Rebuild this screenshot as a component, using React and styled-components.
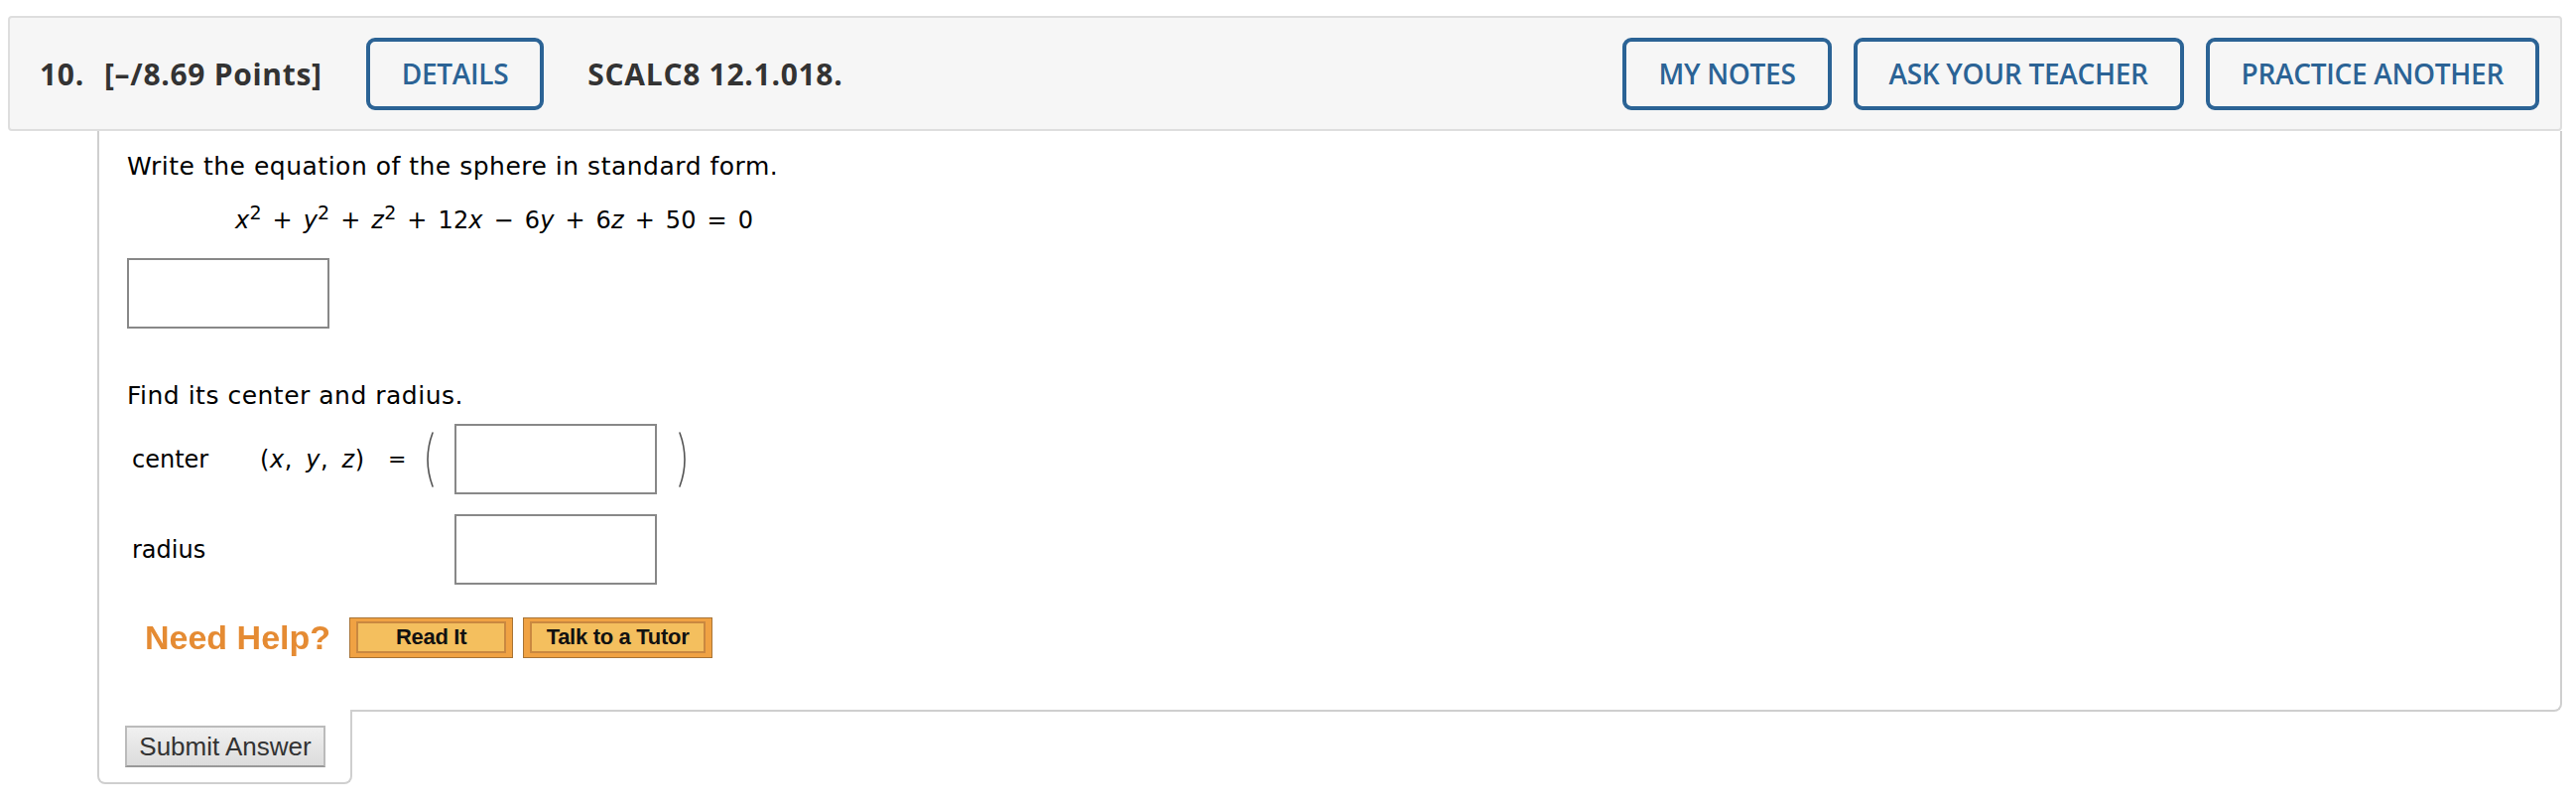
import styled, { createGlobalStyle } from "styled-components";

const Global = createGlobalStyle`
  body {
    margin: 8px;
    background: #fff;
    font-family: "DejaVu Sans", Verdana, sans-serif;
    color: #000;
  }
`;

const Page = styled.div`
  padding: 8px 6px 0 0;
`;

const Header = styled.div`
  display: flex;
  align-items: center;
  height: 112px;
  padding: 0 21px 0 30px;
  background: #f6f6f6;
  border: 2px solid #dedede;
  border-radius: 4px;
  font-family: "Open Sans", sans-serif;
`;

const Title = styled.span`
  font-size: 30px;
  font-weight: 700;
  letter-spacing: 0.7px;
  color: #333;
  margin-right: ${(p) => p.gap || 0}px;
`;

const HeadBtn = styled.button`
  height: 73px;
  padding: 0 32px;
  margin-right: ${(p) => p.gap || 0}px;
  background: transparent;
  border: 4px solid #2b6395;
  border-radius: 9px;
  color: #2b6395;
  font-family: "Open Sans", sans-serif;
  font-size: 28px;
  font-weight: 600;
  letter-spacing: -0.3px;
`;

const Spacer = styled.div`
  flex: 1;
`;

const Body = styled.div`
  margin-left: 90px;
  border: 2px solid #cfcfcf;
  border-top: none;
  border-bottom-right-radius: 8px;
  padding: 22px 28px 52px;
  font-size: 24px;
`;

const Text = styled.p`
  margin: 0;
  font-size: 25px;
  line-height: 28px;
  letter-spacing: 0.5px;
`;

const Equation = styled.div`
  margin: 26px 0 0 109px;
  line-height: 28px;
  word-spacing: 3px;
  letter-spacing: 0.2px;

  i {
    font-style: italic;
  }
  sup {
    font-size: 19px;
    line-height: 0;
    vertical-align: 9px;
  }
`;

const AnswerBox = styled.div`
  width: 200px;
  height: 67px;
  border: 2px solid #888;
  background: #fff;
  flex: none;
`;

const Block = styled.div`
  margin-top: ${(p) => p.mt || 0}px;
`;

const Row = styled.div`
  display: flex;
  align-items: center;
  height: 71px;
  margin-top: ${(p) => p.mt || 0}px;
`;

const Label = styled.span`
  width: ${(p) => p.w}px;
  padding-left: 5px;
  flex: none;
`;

const Coords = styled.span`
  width: 129px;
  flex: none;
  word-spacing: 5px;
  letter-spacing: 0.6px;
`;

const Eq = styled.span`
  width: 34px;
  flex: none;
  font-size: 22px;
`;

const ParenSvg = styled.svg`
  flex: none;
  width: 14px;
  height: 58px;
  margin: ${(p) => p.m};
`;

const HelpRow = styled.div`
  display: flex;
  align-items: center;
  gap: 10px;
  margin: 33px 0 0 18px;
  font-family: "Liberation Sans", Arial, sans-serif;
`;

const HelpText = styled.span`
  font-size: 34px;
  font-weight: 700;
  color: #e58b33;
  margin-right: 9px;
  filter: blur(0.4px);
`;

const HelpBtn = styled.button`
  width: ${(p) => p.w}px;
  height: 41px;
  padding: 3px 6px 4px;
  background: #f0a243;
  border: 1px solid #a87436;
  font-family: "Liberation Sans", Arial, sans-serif;
  cursor: pointer;
`;

const HelpInner = styled.span`
  display: flex;
  align-items: center;
  justify-content: center;
  height: 100%;
  background: #f4bf5e;
  border: 2px solid #c98840;
  box-sizing: border-box;
  font-size: 22px;
  font-weight: 700;
  color: #111;
  letter-spacing: -0.3px;
`;

const SubmitTab = styled.div`
  width: 227px;
  margin: -2px 0 0 90px;
  padding: 16px 0 15px 26px;
  background: #fff;
  border: 2px solid #cfcfcf;
  border-top: none;
  border-radius: 0 0 8px 8px;
`;

const SubmitBtn = styled.button`
  width: 202px;
  height: 42px;
  padding: 0;
  background: linear-gradient(#f0f0f0, #dcdcdc);
  border: 2px solid #bbb;
  border-bottom-color: #999;
  font-family: "Liberation Sans", Arial, sans-serif;
  font-size: 26px;
  color: #333;
`;

const Paren = ({ right, m }) => (
  <ParenSvg viewBox="0 0 14 58" m={m}>
    <path
      d={right ? "M3 2 Q13 29 3 56" : "M11 2 Q1 29 11 56"}
      fill="none"
      stroke="#555"
      strokeWidth="1.6"
      strokeLinecap="round"
    />
  </ParenSvg>
);

export default function App() {
  return (
    <Page>
      <Global />
      <Header>
        <Title gap={20}>10.</Title>
        <Title gap={44}>[–/8.69 Points]</Title>
        <HeadBtn gap={44}>DETAILS</HeadBtn>
        <Title>SCALC8 12.1.018.</Title>
        <Spacer />
        <HeadBtn gap={22}>MY NOTES</HeadBtn>
        <HeadBtn gap={22}>ASK YOUR TEACHER</HeadBtn>
        <HeadBtn>PRACTICE ANOTHER</HeadBtn>
      </Header>

      <Body>
        <Text>Write the equation of the sphere in standard form.</Text>
        <Equation>
          <i>x</i>
          <sup>2</sup> + <i>y</i>
          <sup>2</sup> + <i>z</i>
          <sup>2</sup> + 12<i>x</i> − 6<i>y</i> + 6<i>z</i> + 50 = 0
        </Equation>
        <Block mt={24}>
          <AnswerBox />
        </Block>

        <Block mt={54}>
          <Text>Find its center and radius.</Text>
        </Block>
        <Row mt={14}>
          <Label w={129}>center</Label>
          <Coords>
            (<i>x</i>, <i>y</i>, <i>z</i>)
          </Coords>
          <Eq>=</Eq>
          <Paren m="0 19px 0 0" />
          <AnswerBox />
          <Paren right m="0 0 0 20px" />
        </Row>
        <Row mt={20}>
          <Label w={325}>radius</Label>
          <AnswerBox />
        </Row>

        <HelpRow>
          <HelpText>Need Help?</HelpText>
          <HelpBtn w={165}>
            <HelpInner>Read It</HelpInner>
          </HelpBtn>
          <HelpBtn w={191}>
            <HelpInner>Talk to a Tutor</HelpInner>
          </HelpBtn>
        </HelpRow>
      </Body>

      <SubmitTab>
        <SubmitBtn>Submit Answer</SubmitBtn>
      </SubmitTab>
    </Page>
  );
}
